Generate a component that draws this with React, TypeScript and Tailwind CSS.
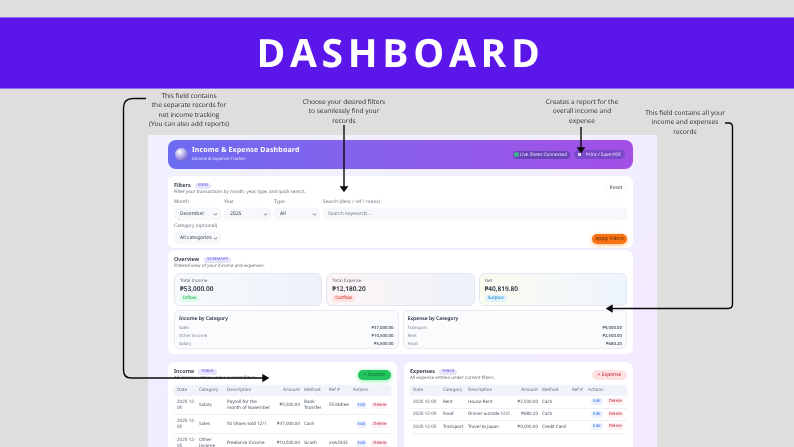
import { ChevronDown } from 'lucide-react'

const incomeRows = [
  { date: '2025-12-05', category: 'Salary', description: 'Payroll for the month of November', amount: '₱5,500.00', method: 'Bank Transfer', ref: '5533dree' },
  { date: '2025-12-05', category: 'Sales', description: '50 Shoes sold 12/1', amount: '₱37,000.00', method: 'Cash', ref: '' },
  { date: '2025-12-05', category: 'Other Income', description: 'Freelance Income', amount: '₱10,500.00', method: 'Gcash', ref: 'xxw3343' },
]

const expenseRows = [
  { date: '2025-12-05', category: 'Rent', description: 'House Rent', amount: '₱2,500.00', method: 'Cash', ref: '' },
  { date: '2025-12-05', category: 'Food', description: 'Dinner outside 12/2', amount: '₱680.20', method: 'Cash', ref: '' },
  { date: '2025-12-05', category: 'Transport', description: 'Travel to Japan', amount: '₱9,000.00', method: 'Credit Card', ref: '' },
]

function Badge({ label }: { label: string }) {
  return <span className="rounded-full bg-[#e6e4fd] px-[3px] text-[4px] leading-[6px] tracking-[0.2px] text-[#5b4fd6]">{label}</span>
}

function Select({ label, value }: { label: string; value: string }) {
  return (
    <div>
      <div className="mb-[2px] text-[4.8px] leading-[7px] whitespace-nowrap text-[#6b7280]">{label}</div>
      <div className="flex h-[12px] items-center justify-between rounded-full bg-[#f7f8fb] pr-[3px] pl-[6px] text-[5px] leading-[12px] whitespace-nowrap text-[#374151] shadow-[0_0_1px_#d8dbe6]">
        {value}
        <ChevronDown className="h-[5px] w-[5px] shrink-0 text-[#222]" strokeWidth={3} />
      </div>
    </div>
  )
}

function Stat({ label, value, tag, tone }: { label: string; value: string; tag: string; tone: string }) {
  return (
    <div className={`h-[33px] rounded-[6px] border border-[#e3e7f2] px-[5px] pt-[4px] ${tone === 'net' ? 'bg-gradient-to-r from-[#fbfbef] to-[#eef5fe]' : tone === 'out' ? 'bg-gradient-to-r from-[#fdf5f5] to-[#eef2fb]' : 'bg-gradient-to-r from-[#f8fafc] to-[#edf1fa]'}`}>
      <div className="text-[4.5px] leading-[6px] text-[#6b7280]">{label}</div>
      <div className="text-[6.5px] leading-[10px] font-semibold text-[#1f2937]">{value}</div>
      <div className={`mt-[1px] w-fit rounded-full px-[3px] text-[4.5px] leading-[7px] ${tone === 'net' ? 'bg-[#e0f2fe] text-[#0284c7]' : tone === 'out' ? 'bg-[#fee2e2] text-[#dc2626]' : 'bg-[#dcfce7] text-[#16a34a]'}`}>{tag}</div>
    </div>
  )
}

function CategoryBox({ title, rows }: { title: string; rows: string[][] }) {
  return (
    <div className="h-[39px] rounded-[5px] border border-[#e8ebf3] bg-[#fafbfd] px-[4px] pt-[4px]">
      <div className="mb-[1px] text-[5px] leading-[8px] font-semibold text-[#1f2937]">{title}</div>
      {rows.map(([name, amount]) => (
        <div key={name} className="flex h-[8px] items-center justify-between text-[4.3px] leading-[8px]">
          <span className="text-[#7b8190]">{name}</span>
          <span className="font-medium text-[#374151]">{amount}</span>
        </div>
      ))}
    </div>
  )
}

function Actions() {
  return (
    <div className="flex items-center justify-center gap-[4px]">
      <span className="rounded-full bg-[#eef2ff] px-[2px] text-[4.3px] leading-[7px] text-[#2563eb]">Edit</span>
      <span className="rounded-full bg-[#fef2f2] px-[2px] text-[4.3px] leading-[7px] text-[#be123c]">Delete</span>
    </div>
  )
}

function RecordTable({ rows, cols }: { rows: typeof incomeRows; cols: string[] }) {
  return (
    <table className="w-full table-fixed border-separate border-spacing-0 overflow-hidden rounded-[4px] text-left text-[4.5px] leading-[6.5px] text-[#4b5563] shadow-[0_0_1px_#d5dae6]">
      <colgroup>
        {cols.map((c, i) => (
          <col key={i} style={{ width: c }} />
        ))}
      </colgroup>
      <thead className="bg-[#f0f3fa] text-[#6b7280]">
        <tr className="h-[11px]">
          <th className="pl-[3px] font-normal">Date</th>
          <th className="font-normal">Category</th>
          <th className="font-normal">Description</th>
          <th className="text-right font-normal">Amount</th>
          <th className="pl-[4px] font-normal">Method</th>
          <th className="font-normal">Ref #</th>
          <th className="font-normal">Actions</th>
        </tr>
      </thead>
      <tbody>
        {rows.map((r) => (
          <tr key={r.description} className="bg-white">
            <td className="border-b border-[#eef0f5] py-[2.5px] pl-[3px] pr-[2px]">{r.date}</td>
            <td className="border-b border-[#eef0f5] pr-[2px]">{r.category}</td>
            <td className="border-b border-[#eef0f5] pr-[2px]">{r.description}</td>
            <td className="border-b border-[#eef0f5] text-right">{r.amount}</td>
            <td className="border-b border-[#eef0f5] pl-[4px]">{r.method}</td>
            <td className="border-b border-[#eef0f5]">{r.ref}</td>
            <td className="border-b border-[#eef0f5]"><Actions /></td>
          </tr>
        ))}
      </tbody>
    </table>
  )
}

function Note({ lines, className }: { lines: string[]; className: string }) {
  return (
    <div className={`absolute -translate-x-1/2 text-center font-['Open_Sans',sans-serif] text-[6.6px] leading-[9.4px] whitespace-nowrap text-[#2b2b2b] ${className}`}>
      {lines.map((l) => (
        <div key={l}>{l}</div>
      ))}
    </div>
  )
}

export default function App() {
  return (
    <div className="relative h-[447px] w-[794px] overflow-hidden bg-[#dfdddd] font-['Noto_Sans',sans-serif] blur-[0.3px] [text-rendering:geometricPrecision]">
      {/* Banner */}
      <div className="mt-[17px] flex h-[72px] items-center justify-center border-y border-[#8f6cf0] bg-[#5b17ea] pt-[1px] pl-[7px] font-['Open_Sans',sans-serif] text-[39px] font-bold tracking-[4.7px] text-white">
        DASHBOARD
      </div>

      {/* App window */}
      <div className="mt-[46px] ml-[148px] flex h-[400px] w-[509px] flex-col gap-[2px] bg-gradient-to-br from-[#f0f0ff] to-[#f3e9ff] pt-[5px] pr-[24px] pl-[20px]">
        <div className="mb-[5px] flex h-[29px] items-center justify-between rounded-[8px] bg-gradient-to-r from-[#6c6cf0] to-[#a34fe6] pr-[8px] pl-[7px]">
          <div className="flex items-center gap-[4px]">
            <div className="h-[13px] w-[13px] rounded-full bg-[radial-gradient(circle_at_35%_30%,#ffffff,#a79be8_50%,#4b3ea8)]" />
            <div>
              <div className="text-[7px] leading-[10px] font-bold tracking-[0.15px] text-white">Income &amp; Expense Dashboard</div>
              <div className="text-[4.3px] leading-[7px] text-[#ece6ff]">Income &amp; Expense Tracker</div>
            </div>
          </div>
          <div className="flex items-center gap-[4px] text-[4.7px] leading-[8px] text-[#f3edff]">
            <span className="flex h-[8px] items-center gap-[1px] rounded-full bg-[#6a43b8] px-[1px] pr-[3px]">
              <span className="h-[5px] w-[5px] rounded-full bg-[#3bb48f]" />
              Live Sheet Connected
            </span>
            <span className="flex h-[9px] items-center gap-[5px] rounded-full bg-[#7a49c9] px-[4px]">
              <span className="h-[3px] w-[3px] bg-[#d9d2f5]" />
              Print / Save PDF
            </span>
          </div>
        </div>

        {/* Filters */}
        <section className="h-[72px] rounded-[6px] bg-white px-[6px] pt-[6px]">
          <div className="flex items-start justify-between">
            <div>
              <div className="flex items-center gap-[4px]">
                <span className="text-[5.5px] leading-[7px] font-semibold text-[#1f2937]">Filters</span>
                <Badge label="VIEW" />
              </div>
              <div className="text-[4.5px] leading-[7px] text-[#6b7280]">Filter your transactions by month, year, type, and quick search.</div>
            </div>
            <span className="mt-[1px] flex h-[10px] w-[22px] items-center justify-center rounded-full text-[5px] leading-[10px] text-[#374151] shadow-[0_0_1px_#d8dbe6]">Reset</span>
          </div>
          <div className="mt-[3px] grid grid-cols-[47px_47px_46px_1fr] gap-x-[3px]">
            <Select label="Month" value="December" />
            <Select label="Year" value="2025" />
            <Select label="Type" value="All" />
            <div>
              <div className="mb-[2px] text-[4.8px] leading-[7px] text-[#6b7280]">Search (desc / ref / notes)</div>
              <div className="flex h-[12px] items-center rounded-full bg-[#f7f8fb] pl-[5px] text-[5px] leading-[12px] text-[#7b8190] shadow-[0_0_1px_#d8dbe6]">Search keywords...</div>
            </div>
          </div>
          <div className="mt-[3px] flex items-end justify-between">
            <div className="w-[47px]">
              <Select label="Category (optional)" value="All categories" />
            </div>
            <span className="flex h-[10px] w-[35px] items-center justify-center rounded-full bg-[#f97316] text-[5px] leading-[10px] text-[#5b2a06] shadow-[0_1px_4px_#fdba74]">Apply Filters</span>
          </div>
        </section>

        {/* Overview */}
        <section className="h-[104px] rounded-[6px] bg-white px-[6px] pt-[6px]">
          <div className="flex items-center gap-[5px]">
            <span className="text-[5.5px] leading-[7px] font-semibold text-[#1f2937]">Overview</span>
            <Badge label="SUMMARY" />
          </div>
          <div className="text-[4.5px] leading-[7px] text-[#6b7280]">Filtered view of your income and expenses.</div>
          <div className="mt-[3px] grid grid-cols-3 gap-[4px]">
            <Stat label="Total Income" value="₱53,000.00" tag="Inflow" tone="in" />
            <Stat label="Total Expense" value="₱12,180.20" tag="Outflow" tone="out" />
            <Stat label="Net" value="₱40,819.80" tag="Surplus" tone="net" />
          </div>
          <div className="mt-[4px] grid grid-cols-2 gap-[4px]">
            <CategoryBox title="Income by Category" rows={[['Sales', '₱37,000.00'], ['Other Income', '₱10,500.00'], ['Salary', '₱5,500.00']]} />
            <CategoryBox title="Expense by Category" rows={[['Transport', '₱9,000.00'], ['Rent', '₱2,500.00'], ['Food', '₱680.20']]} />
          </div>
        </section>

        {/* Tables */}
        <div className="mt-[6px] grid grid-cols-2 gap-[7px]">
          <section className="rounded-[6px] bg-white px-[6px] pt-[6px] pb-[10px]">
            <div className="flex items-start justify-between">
              <div>
                <div className="flex items-center gap-[4px]">
                  <span className="text-[5.5px] leading-[7px] font-semibold text-[#1f2937]">Income</span>
                  <Badge label="TABLE" />
                </div>
                <div className="text-[4.5px] leading-[7px] text-[#6b7280]">All income entries under current filters.</div>
              </div>
              <span className="mt-[2px] flex h-[10px] w-[33px] items-center justify-center gap-[3px] rounded-full bg-[#22c55e] text-[5px] leading-[10px] text-[#166534] shadow-[0_1px_5px_#86efac]">+ Income</span>
            </div>
            <div className="mt-[3px]">
              <RecordTable rows={incomeRows} cols={['25px', '28px', '47px', '26px', '29px', '24px', '38px']} />
            </div>
          </section>
          <section className="rounded-[6px] bg-white px-[6px] pt-[6px] pb-[10px]">
            <div className="flex items-start justify-between">
              <div>
                <div className="flex items-center gap-[4px]">
                  <span className="text-[5.5px] leading-[7px] font-semibold text-[#1f2937]">Expenses</span>
                  <Badge label="TABLE" />
                </div>
                <div className="text-[4.5px] leading-[7px] text-[#6b7280]">All expense entries under current filters.</div>
              </div>
              <span className="mt-[2px] flex h-[10px] w-[35px] items-center justify-center rounded-full bg-[#fee2e2] text-[5px] leading-[10px] text-[#be123c]">+ Expense</span>
            </div>
            <div className="mt-[3px]">
              <RecordTable rows={expenseRows} cols={['33px', '25px', '47px', '23px', '34px', '16px', '39px']} />
            </div>
          </section>
        </div>
      </div>

      {/* Callouts over the page */}
      <Note className="top-[91px] left-[189px]" lines={['This field contains', 'the separate records for', 'net income tracking', '(You can also add reports)']} />
      <Note className="top-[97px] left-[344px]" lines={['Choose your desired filters', 'to seamlessly find your', 'records']} />
      <Note className="top-[97px] left-[582px]" lines={['Creates a report for the', 'overall income and', 'expense']} />
      <Note className="top-[108px] left-[685px]" lines={['This field contains all your', 'income and expenses', 'records']} />

      <svg className="absolute inset-0" width="794" height="447" fill="none" stroke="#0a0a0a" strokeWidth="1.4">
        <path d="M146 98.5H133Q123.500 98.500 123.500 108V370Q123.500 378 131 378H264" />
        <path d="M263 375L268 378L263 381Z" fill="#0a0a0a" />
        <path d="M344 125V187" />
        <path d="M341 187H347L344 191Z" fill="#0a0a0a" />
        <path d="M581 127V148" />
        <path d="M578 148H584L581 152Z" fill="#0a0a0a" />
        <path d="M725 123H729Q732.500 123 732.500 127V304Q732.500 308.500 728 308.500H611" />
        <path d="M612 305.500L607 308.500L612 311.500Z" fill="#0a0a0a" />
      </svg>
    </div>
  )
}
